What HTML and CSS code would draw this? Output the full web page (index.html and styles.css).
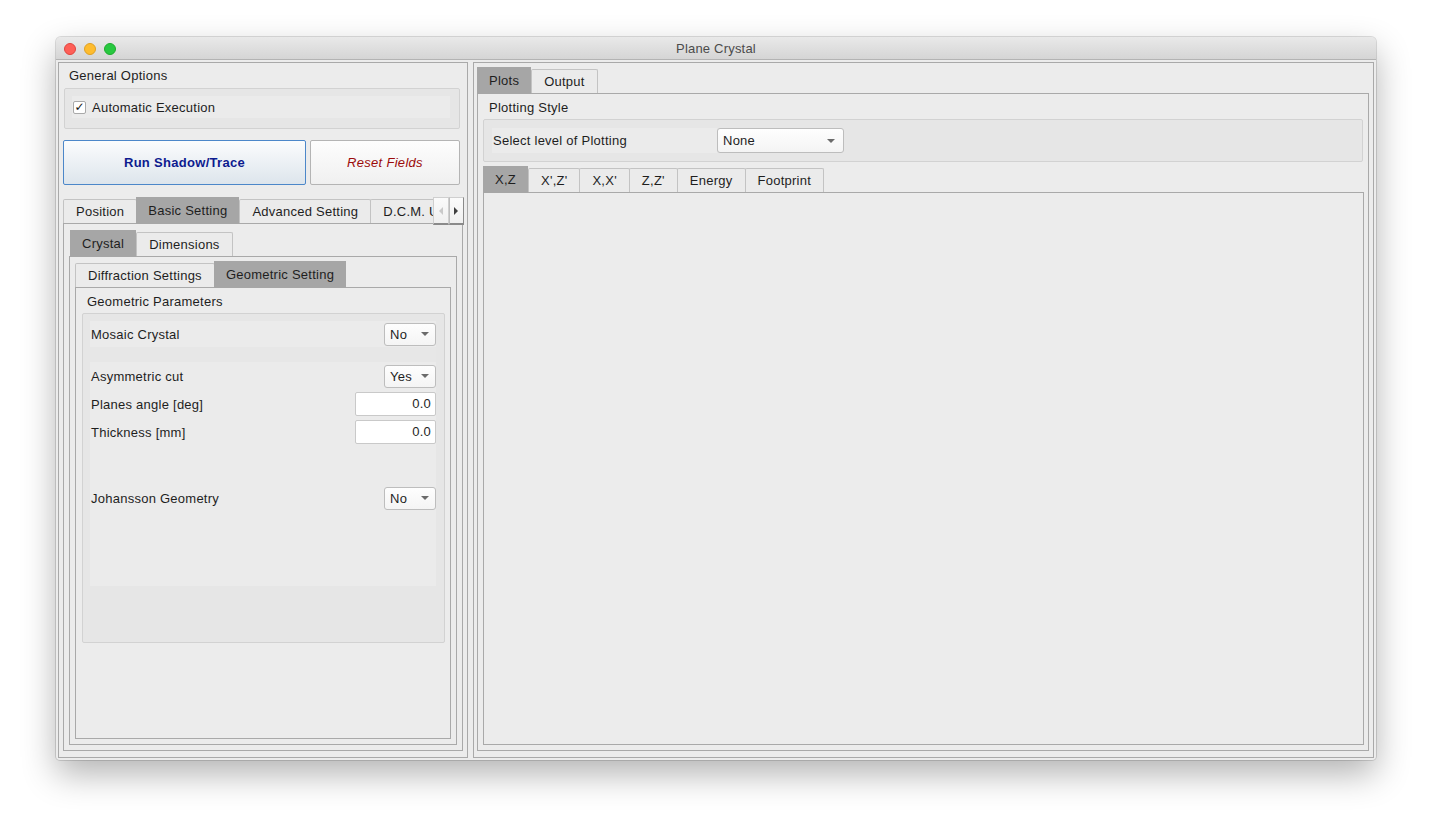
FILE: index.html
```html
<!DOCTYPE html>
<html>
<head>
<meta charset="utf-8">
<title>Plane Crystal</title>
<link rel="stylesheet" href="styles.css">
</head>
<body>
<div class="screen">
  <div class="window">
    <div class="titlebar">
      <div class="lights">
        <span class="light red"></span><span class="light yellow"></span><span class="light green"></span>
      </div>
      <div class="title">Plane Crystal</div>
      <div></div>
    </div>
    <div class="content">
      <div class="panel left-panel">
        <div class="glabel">General Options</div>
        <div class="gbox general">
          <div class="grow"><span class="checkbox">✓</span><span>Automatic Execution</span></div>
        </div>
        <div class="actions">
          <button class="btn run">Run Shadow/Trace</button>
          <button class="btn reset">Reset Fields</button>
        </div>
        <div class="tabwidget tw-basic">
          <div class="tabbar">
            <div class="tab">Position</div>
            <div class="tab sel">Basic Setting</div>
            <div class="tab">Advanced Setting</div>
            <div class="tab">D.C.M. Undulator</div>
          </div>
          <div class="scroller">
            <span class="sbtn"><span class="arr arr-left"></span></span><span class="sbtn"><span class="arr arr-right"></span></span>
          </div>
          <div class="pane">
            <div class="tabwidget tw-crystal">
              <div class="tabbar">
                <div class="tab sel">Crystal</div>
                <div class="tab">Dimensions</div>
              </div>
              <div class="pane">
                <div class="tabwidget tw-geo">
                  <div class="tabbar">
                    <div class="tab">Diffraction Settings</div>
                    <div class="tab sel">Geometric Setting</div>
                  </div>
                  <div class="pane">
                    <div class="glabel inner">Geometric Parameters</div>
                    <div class="gbox geo">
                      <div class="rows">
                        <div class="frow r1"><span>Mosaic Crystal</span><div class="combo small"><span>No</span><span class="caret"></span></div></div>
                        <div class="spacer s1"></div>
                        <div class="frow"><span>Asymmetric cut</span><div class="combo small"><span>Yes</span><span class="caret"></span></div></div>
                        <div class="frow"><span>Planes angle [deg]</span><div class="field">0.0</div></div>
                        <div class="frow"><span>Thickness [mm]</span><div class="field">0.0</div></div>
                        <div class="spacer s2"></div>
                        <div class="frow"><span>Johansson Geometry</span><div class="combo small"><span>No</span><span class="caret"></span></div></div>
                      </div>
                    </div>
                  </div>
                </div>
              </div>
            </div>
          </div>
        </div>
      </div>
      <div class="panel right-panel">
        <div class="tabwidget tw-plots">
          <div class="tabbar">
            <div class="tab sel">Plots</div>
            <div class="tab">Output</div>
          </div>
          <div class="pane">
            <div class="glabel inner">Plotting Style</div>
            <div class="gbox plot">
              <div class="prow">
                <div class="plabel">Select level of Plotting</div>
                <div class="combo wide"><span>None</span><span class="caret"></span></div>
              </div>
            </div>
            <div class="tabwidget tw-xy">
              <div class="tabbar">
                <div class="tab sel">X,Z</div>
                <div class="tab">X',Z'</div>
                <div class="tab">X,X'</div>
                <div class="tab">Z,Z'</div>
                <div class="tab">Energy</div>
                <div class="tab">Footprint</div>
              </div>
              <div class="pane"></div>
            </div>
          </div>
        </div>
      </div>
    </div>
  </div>
</div>
</body>
</html>
```
FILE: styles.css
```css
* { box-sizing: border-box; }
html, body { margin: 0; padding: 0; }
body {
  width: 1432px;
  height: 834px;
  overflow: hidden;
  background: #ffffff;
  font-family: "Liberation Sans", Arial, sans-serif;
  font-size: 13px;
  letter-spacing: 0.25px;
  color: #1e1e1e;
}
.screen { padding: 37px 0 0 56px; }
.window {
  width: 1320px;
  height: 723px;
  background: #ececec;
  border-radius: 5px 5px 4px 4px;
  box-shadow: 0 0 0 1px rgba(0,0,0,0.13), 0 14px 34px rgba(0,0,0,0.30);
  display: flex;
  flex-direction: column;
  overflow: hidden;
}
.titlebar {
  height: 23px;
  flex: none;
  display: grid;
  grid-template-columns: 1fr auto 1fr;
  align-items: center;
  padding-top: 2px;
  background: linear-gradient(#e9e9e9, #d5d5d5);
  border-bottom: 1px solid #b3b3b3;
}
.lights { display: flex; gap: 8px; padding-left: 8px; }
.light { width: 12px; height: 12px; border-radius: 50%; display: block; }
.red { background: #fe5f57; border: 1px solid #e0443e; }
.yellow { background: #febc2e; border: 1px solid #dfa123; }
.green { background: #28c840; border: 1px solid #1dac2c; }
.title { color: #4b4b4b; font-size: 13px; line-height: 16px; letter-spacing: 0.2px; }

.content {
  flex: 1;
  display: flex;
  gap: 5px;
  padding: 2px;
  min-height: 0;
}
.panel {
  border: 1px solid #a9a9a9;
  display: flex;
  flex-direction: column;
  min-height: 0;
}
.left-panel { width: 410px; flex: none; }
.right-panel { width: 901px; flex: none; }

.glabel {
  height: 25px;
  flex: none;
  padding: 5px 0 0 10px;
  line-height: 16px;
}
.glabel.inner { padding: 6px 0 0 11px; }

.gbox {
  flex: none;
  background: #e6e6e6;
  border: 1px solid #d2d2d2;
  border-radius: 2px;
}
.gbox.general { margin: 0 7px 0 5px; height: 41px; padding: 7px 9px 0 7px; }
.grow {
  height: 22px;
  background: #ebebeb;
  display: flex;
  align-items: center;
}
.checkbox {
  width: 13px;
  height: 13px;
  margin: 0 6px 0 1px;
  background: #ffffff;
  border: 1px solid #a9a9a9;
  border-radius: 2px;
  font-size: 12px;
  line-height: 11px;
  text-align: center;
  letter-spacing: 0;
  color: #111;
  font-family: "DejaVu Sans", sans-serif;
}

.actions {
  flex: none;
  display: flex;
  gap: 4px;
  margin: 11px 0 0 4px;
  height: 45px;
}
.btn {
  height: 45px;
  font-family: "Liberation Sans", Arial, sans-serif;
  font-size: 13px;
  letter-spacing: 0.3px;
  border-radius: 2px;
  padding: 0;
}
.run {
  width: 243px;
  border: 1px solid #4c87c9;
  background: linear-gradient(#fbfcfd, #dde5ec);
  color: #0d1b8f;
  font-weight: bold;
}
.reset {
  width: 150px;
  border: 1px solid #b4b4b4;
  background: linear-gradient(#fdfdfd, #f0f0f0);
  color: #9b0b0b;
  font-style: italic;
}

.tabwidget {
  display: flex;
  flex-direction: column;
  flex: 1;
  min-height: 0;
  position: relative;
}
.tw-basic { margin: 12px 4px 6px 4px; }
.tw-crystal { margin: 6px 5px 5px 5px; }
.tw-geo { margin: 4px 5px 5px 5px; }
.tw-plots { margin: 4px 4px 6px 3px; }
.tw-xy { margin: 4px 4px 5px 5px; }

.tabbar {
  height: 27px;
  flex: none;
  display: flex;
  align-items: flex-end;
  overflow: hidden;
  background: linear-gradient(#a9a9a9, #a9a9a9) no-repeat left bottom / 100% 1px;
}
.tab {
  flex: none;
  height: 24px;
  margin-bottom: 1px;
  margin-right: -1px;
  padding: 0 12px;
  line-height: 24px;
  white-space: nowrap;
  background: #ebebeb;
  border: 1px solid #c3c3c3;
  border-bottom: none;
  border-radius: 2px 2px 0 0;
}
.tab.sel {
  height: 27px;
  margin-bottom: 0;
  margin-right: 0;
  padding: 0 12px;
  line-height: 27px;
  background: #a6a6a6;
  border: none;
  border-radius: 0;
  position: relative;
  z-index: 1;
}
.tw-crystal > .tabbar { padding-left: 1px; }

.scroller {
  position: absolute;
  top: 0;
  right: -1px;
  width: 31px;
  height: 28px;
  display: flex;
  z-index: 2;
}
.sbtn {
  flex: 1;
  display: flex;
  align-items: center;
  justify-content: center;
  background: linear-gradient(#fbfbfb, #efefef);
  border: 1px solid #cfcfcf;
  border-bottom: 2px solid #8a8a8a;
}
.sbtn + .sbtn { border-left: 1px solid #bdbdbd; border-right: 1px solid #8a8a8a; }
.arr { width: 0; height: 0; border-top: 4px solid transparent; border-bottom: 4px solid transparent; }
.arr-left { border-right: 4px solid #c9c9c9; }
.arr-right { border-left: 4px solid #3f3f3f; }

.pane {
  flex: 1;
  min-height: 0;
  display: flex;
  flex-direction: column;
  border: 1px solid #a9a9a9;
  border-top: none;
}

.gbox.geo { margin: 0 5px 0 6px; height: 330px; padding: 7px 8px 0 7px; }
.rows {
  height: 265px;
  background: #ebebeb;
  display: flex;
  flex-direction: column;
}
.frow {
  height: 28px;
  flex: none;
  display: flex;
  align-items: center;
  justify-content: space-between;
  padding-left: 1px;
}
.frow.r1 { height: 26px; }
.spacer { flex: none; }
.s1 { height: 15px; background: #e7e7e7; }
.s2 { height: 38px; }

.combo {
  display: flex;
  align-items: center;
  justify-content: space-between;
  height: 23px;
  background: linear-gradient(#fefefe, #f4f4f4);
  border: 1px solid #bdbdbd;
  border-radius: 3px;
  padding: 0 6px 0 5px;
}
.combo.small { width: 52px; }
.combo.wide { width: 127px; height: 25px; padding: 0 8px 0 5px; }
.caret {
  width: 0;
  height: 0;
  border-left: 4px solid transparent;
  border-right: 4px solid transparent;
  border-top: 4px solid #6b6b6b;
}
.field {
  width: 81px;
  height: 24px;
  background: #ffffff;
  border: 1px solid #c9c9c9;
  border-radius: 2px;
  text-align: right;
  padding-right: 4px;
  line-height: 22px;
}

.gbox.plot { margin: 0 5px; height: 43px; padding: 8px 8px 0 8px; }
.prow { display: flex; height: 25px; }
.plabel {
  width: 225px;
  height: 25px;
  line-height: 25px;
  padding-left: 1px;
  background: #ebebeb;
}
```
